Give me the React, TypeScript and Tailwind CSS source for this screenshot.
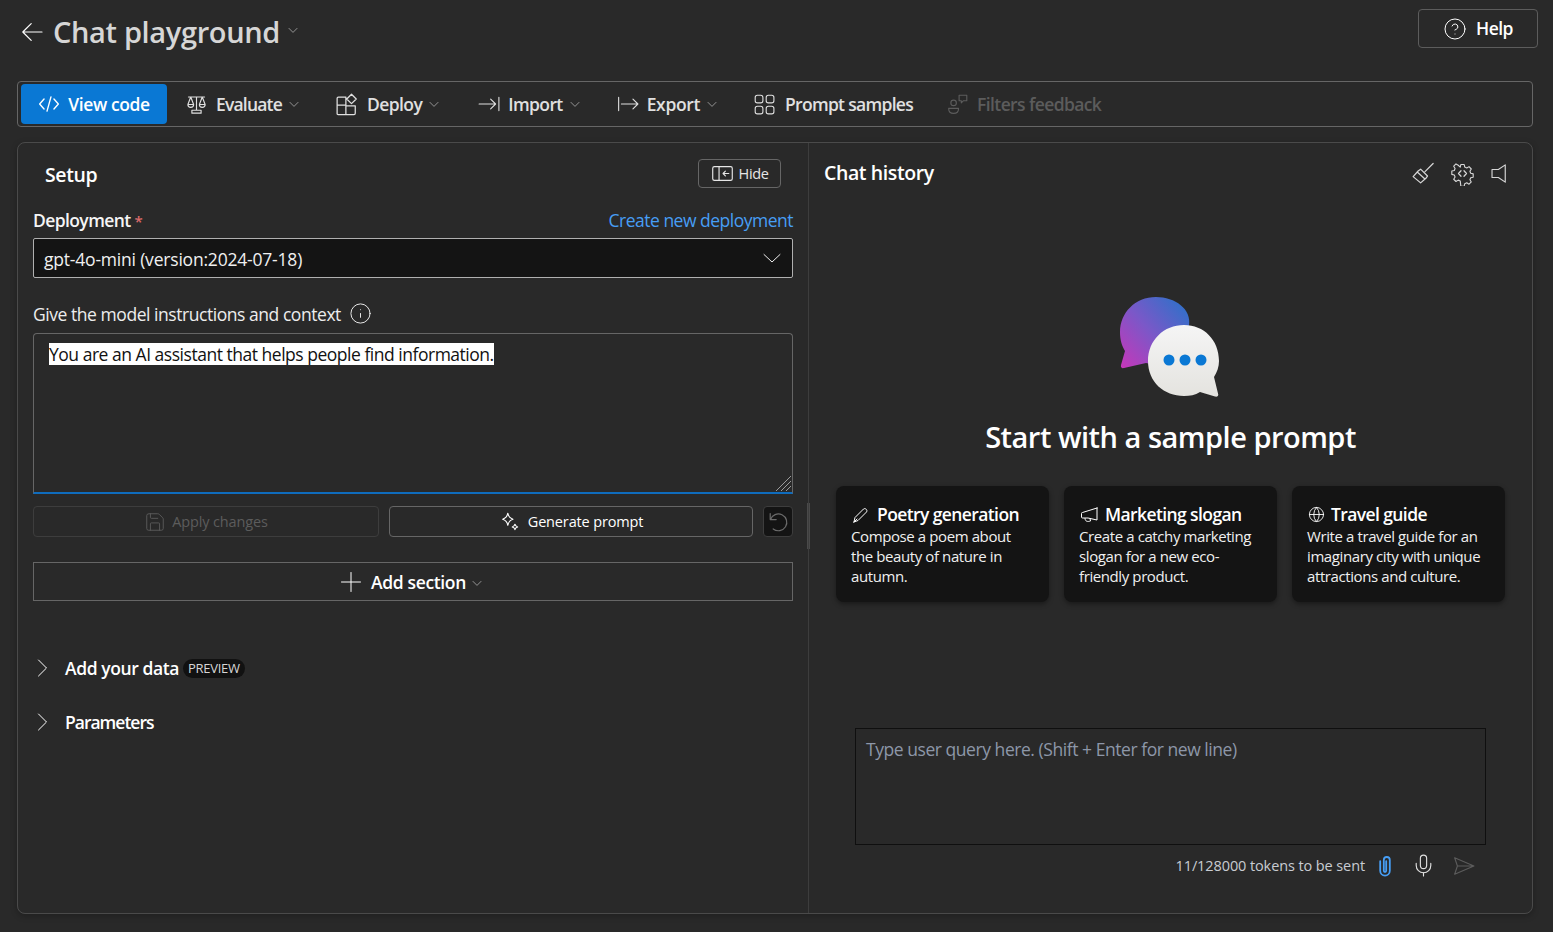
import { CircleHelp, Globe, Info, Mic, Save } from "lucide-react";
import type { ReactNode } from "react";

const font = "font-['Open_Sans','Noto_Sans',sans-serif]";

function Ico({ size = 20, className = "", sw = 1, children }: { size?: number; className?: string; sw?: number; children: ReactNode }) {
  return (
    <svg width={size} height={size} viewBox="0 0 20 20" fill="none" stroke="currentColor" strokeWidth={sw} strokeLinecap="round" strokeLinejoin="round" className={`shrink-0 ${className}`}>
      {children}
    </svg>
  );
}

function Chevron({ className = "" }: { className?: string }) {
  return (
    <Ico size={16} className={`text-[#adadad] ${className}`}>
      <path d="M5 8l5 5 5-5" />
    </Ico>
  );
}

function ExpandChevron() {
  return (
    <Ico size={20}>
      <path d="M5.500 2l8 8-8 8" />
    </Ico>
  );
}

interface ToolItemProps {
  icon: ReactNode;
  label: string;
  caret?: boolean;
  muted?: boolean;
  className?: string;
  labelClassName?: string;
}

function ToolItem({ icon, label, caret, muted, className = "pl-[18px] pr-[16px]", labelClassName = "ml-2 tracking-[-0.6px]" }: ToolItemProps) {
  return (
    <div className={`flex items-center h-[40px] text-[17.5px] font-semibold ${muted ? "text-[#5c5c5c]" : "text-[#e0e0e0]"} ${className}`}>
      {icon}
      <span className={labelClassName}>{label}</span>
      {caret && <Chevron className="ml-[4px]" />}
    </div>
  );
}

function SampleCard({ icon, title, text }: { icon: ReactNode; title: string; text: string }) {
  return (
    <div className="w-[213px] h-[116px] rounded-lg bg-[#141414] shadow-[0_2px_5px_rgba(0,0,0,0.4)] pt-[17px] pl-[15px] pr-[17px] text-white">
      <div className="flex items-center gap-[6px] text-[17.5px] leading-[23px] font-semibold tracking-[-0.6px]">
        {icon}
        {title}
      </div>
      <p className="text-[15px] leading-5 tracking-[-0.4px] text-[#f0f0f0]">{text}</p>
    </div>
  );
}

function ChatLogo() {
  return (
    <svg width="104" height="102" viewBox="0 0 104 102">
      <defs>
        <linearGradient id="bubbleBack" x1="0" y1="1" x2="1" y2="0.1">
          <stop offset="0" stopColor="#c836b8" />
          <stop offset="0.5" stopColor="#7a58c8" />
          <stop offset="1" stopColor="#2b72c9" />
        </linearGradient>
        <linearGradient id="bubbleFront" x1="0" y1="0" x2="0" y2="1">
          <stop offset="0" stopColor="#f5f5f5" />
          <stop offset="1" stopColor="#e4e3df" />
        </linearGradient>
      </defs>
      <path d="M37 0C16 0 1 16 1 35c0 8 2 14 5 19L2 68c-.6 2.4 1 3.6 3 3l22-5 14 3 29-40C73 12 56 0 37 0Z" fill="url(#bubbleBack)" />
      <path d="M65 28c-20 0-36 15-36 36s16 35 36 35c6 0 11-1 16-4l15 4.500c2.400.6 4-1 3-3L95 80c3-5 5-10 5-16 0-21-15-36-35-36Z" fill="url(#bubbleFront)" />
      <circle cx="50" cy="63" r="5.500" fill="#0a78d4" />
      <circle cx="66" cy="63" r="5.500" fill="#0a78d4" />
      <circle cx="82" cy="63" r="5.500" fill="#0a78d4" />
    </svg>
  );
}

export default function App() {
  return (
    <div className={`h-[932px] w-[1553px] overflow-hidden bg-[#292929] text-white ${font}`}>
      <header className="flex justify-between pl-[21px] pr-[15px] pt-[9px] h-[81px]">
        <div className="flex items-center h-[46px]">
          <Ico size={24}>
            <path d="M1.500 10h16M8.500 3l-7 7 7 7" />
          </Ico>
          <h1 className="ml-2 text-[29px] font-semibold tracking-[-0.35px] text-[#d6d6d6]">Chat playground</h1>
          <Chevron className="ml-[5px] mb-1" />
        </div>
        <div className="flex items-center justify-center gap-[9px] w-[120px] h-[39px] rounded border border-[#5c5c5c] text-[17.5px] font-semibold tracking-[-0.5px]">
          <CircleHelp size={24} strokeWidth={1} />
          Help
        </div>
      </header>

      <nav className="ml-[17px] w-[1516px] h-[46px] flex items-center rounded border border-[#666] pl-[3px]">
        <div className="flex items-center gap-2 h-[40px] w-[146px] justify-center rounded bg-[#0a78d4] text-[17.5px] font-semibold tracking-[-0.4px]">
          <Ico size={22} sw={1.25}>
            <path d="M5.500 5.500 1.500 10l4 4.500M14.500 5.500l4 4.500-4 4.500M11.800 3.500l-3.600 13" />
          </Ico>
          View code
        </div>
        <ToolItem
          labelClassName="ml-2 tracking-[-0.8px]"
          icon={
            <Ico size={23}>
              <path d="M3 3.500h14M10 3.500v11.500M6 15h8v2.500H6V15ZM5 3.500 2.500 10h5L5 3.500ZM15 3.500 12.500 10h5L15 3.500ZM2.500 10a2.500 2.500 0 0 0 5 0M12.500 10a2.500 2.500 0 0 0 5 0" />
            </Ico>
          }
          label="Evaluate"
          caret
        />
        <ToolItem
          icon={
            <Ico size={25} className="-ml-[2px]">
              <path d="M9 4H3.500A1 1 0 0 0 2.500 5v12a.8.8 0 0 0 1 1H16a1 1 0 0 0 1-1v-6h-7.500V4ZM2.500 10.500h7v7.500M14 1.800l3.800 3.800L14 9.300l-3.800-3.700L14 1.800Z" />
            </Ico>
          }
          label="Deploy"
          caret
        />
        <ToolItem
          className="pl-[20px] pr-[16px]"
          icon={
            <Ico size={22}>
              <path d="M1 10h15M11.500 5.500l4.500 4.500-4.500 4.500M19 4v12" />
            </Ico>
          }
          label="Import"
          caret
        />
        <ToolItem
          className="pl-[18px] pr-[15px]"
          labelClassName="ml-2 tracking-[-0.35px]"
          icon={
            <Ico size={22}>
              <path d="M1.500 4v12M4 10h15M14.500 5.500 19 10l-4.500 4.500" />
            </Ico>
          }
          label="Export"
          caret
        />
        <ToolItem
          labelClassName="ml-[10px] tracking-[-0.7px]"
          icon={
            <Ico size={22}>
              <rect x="2" y="2" width="7" height="7" rx="2" />
              <rect x="12" y="2" width="7" height="7" rx="2" />
              <rect x="2" y="12" width="7" height="7" rx="2" />
              <rect x="12" y="12" width="7" height="7" rx="2" />
            </Ico>
          }
          label="Prompt samples"
        />
        <ToolItem
          muted
          icon={
            <Ico size={22}>
              <circle cx="6" cy="9" r="2.500" />
              <path d="M1.500 14h9c0 3-2 4.500-4.500 4.500S1.500 17 1.500 14ZM11 2h7v5h-3l-2 2V7h-2V2Z" />
            </Ico>
          }
          label="Filters feedback"
        />
      </nav>

      <main className="ml-[17px] w-[1516px] mt-[15px] h-[772px] flex rounded-lg border border-[#4a4a4a] shadow-[0_2px_6px_rgba(0,0,0,0.25)]">
        <section className="relative w-[791px] shrink-0 border-r border-[#3d3d3d] px-[15px]">
          <div className="flex items-start justify-between px-3 pt-4 h-[56px]">
            <h2 className="text-[19.5px] leading-[32px] font-semibold tracking-[-0.4px]">Setup</h2>
            <div className="flex items-center gap-[5px] w-[83px] h-[29px] justify-center rounded border border-[#666] text-[14.5px] tracking-[-0.4px] text-[#e6e6e6]">
              <Ico size={23}>
                <rect x="1.500" y="4" width="17" height="12" rx="1.500" />
                <path d="M7 4v12M15.500 10h-5M12.500 8l-2 2 2 2" />
              </Ico>
              Hide
            </div>
          </div>

          <div className="flex items-center justify-between h-[39px] pb-[1px] pt-[5px] text-[17.5px] tracking-[-0.5px]">
            <span className="font-semibold tracking-[-0.6px] text-[#f5f5f5]">
              Deployment <span className="text-[#dc6b6b] text-[15px]">*</span>
            </span>
            <span className="text-[#479ef5]">Create new deployment</span>
          </div>
          <div className="flex items-center justify-between h-[40px] rounded-[2px] border border-[#b0b0b0] bg-[#141414] px-[10px] pt-[2px] text-[17.5px] tracking-[-0.2px] text-[#f0f0f0]">
            gpt-4o-mini (version:2024-07-18)
            <Ico size={20} className="mb-[2px]">
              <path d="M2 6.500 10 14l8-7.500" />
            </Ico>
          </div>

          <div className="flex items-center gap-2 h-[55px] pt-[19px] pb-[1px] text-[17.5px] tracking-[-0.45px] text-[#ededed]">
            Give the model instructions and context
            <Info size={23} strokeWidth={1} className="mb-[2px]" />
          </div>
          <div className="relative h-[161px] rounded-t border border-[#666] border-b-2 border-b-[#0f6cbd] pl-[15px] pt-[9px]">
            <span className="inline-block bg-white text-[#111] text-[17.5px] leading-[22px] tracking-[-0.48px]">
              You are an AI assistant that helps people find information.
            </span>
            <svg width="18" height="18" viewBox="0 0 18 18" className="absolute right-0 bottom-0 text-[#9a9a9a]" stroke="currentColor" strokeWidth="1">
              <path d="M17 2 2 17M17 7 7 17M17 12l-5 5" />
            </svg>
          </div>

          <div className="flex gap-[10px] mt-3 h-[31px]">
            <div className="flex items-center justify-center gap-[6px] w-[346px] rounded border border-[#3d3d3d] text-[14.5px] tracking-[-0.15px] text-[#5c5c5c]">
              <Save size={22} strokeWidth={1} />
              Apply changes
            </div>
            <div className="flex items-center justify-center gap-[7px] w-[364px] rounded border border-[#666] text-[14.5px] tracking-[-0.15px] text-white">
              <Ico size={22}>
                <path d="M8 2c.6 3.300 1.800 4.700 4.700 5.500-2.900.8-4.100 2.200-4.700 5.500-.6-3.300-1.800-4.700-4.700-5.500C6.200 6.700 7.400 5.300 8 2ZM14.500 12c.3 1.500 1 2.200 2.500 2.500-1.500.3-2.200 1-2.500 2.500-.3-1.500-1-2.200-2.500-2.500 1.500-.3 2.200-1 2.500-2.500Z" />
              </Ico>
              Generate prompt
            </div>
            <div className="flex items-center justify-center w-[30px] rounded border border-[#3d3d3d] bg-[#141414] text-[#6b6b6b]">
              <Ico size={24}>
                <path d="M3.500 3v5h5M3.700 8A7 7 0 1 1 6 15.800" />
              </Ico>
            </div>
          </div>
          <div className="absolute left-[789px] top-[360px] h-[46px] w-[3px] border-x border-[#4a4a4a]" />

          <div className="mt-[25px] flex items-center justify-center gap-[10px] h-[39px] border border-[#666] text-[17.5px] font-semibold tracking-[-0.35px]">
            <Ico size={20}>
              <path d="M10 .500v19M.500 10h19" />
            </Ico>
            <span className="flex items-center pt-[2px]">
              Add section
              <Chevron className="ml-[3px]" />
            </span>
          </div>

          <div className="mt-[50px] flex items-center h-[34px] text-[17.5px] font-semibold tracking-[-0.4px]">
            <ExpandChevron />
            <span className="ml-[12px]">Add your data</span>
            <span className="ml-[4px] rounded-full bg-[#111] px-[5px] text-[13px] leading-[19px] font-normal tracking-[-0.3px] text-[#d6d6d6]">PREVIEW</span>
          </div>
          <div className="mt-[20px] flex items-center h-[34px] text-[17.5px] font-semibold tracking-[-1px]">
            <ExpandChevron />
            <span className="ml-[12px]">Parameters</span>
          </div>
        </section>

        <section className="flex-1 flex flex-col pl-[15px]">
          <div className="flex items-center justify-between h-[60px] pr-[21px]">
            <h2 className="text-[19.5px] font-semibold tracking-[-0.4px]">Chat history</h2>
            <div className="flex items-center text-[#d6d6d6]">
              <Ico size={25}>
                <path d="M18.500 2 12 8.500M8.500 6.500l5.500 5.500-1.500 2-4 3.500-6-5 4-4.500 2-1.500ZM6 9l5.500 5" />
              </Ico>
              <Ico size={25} className="ml-[15px]">
                <path d="M8.500 2h3l.5 2.300 1.800.8 2-1.200 2 2.100-1.200 2 .7 1.800 2.200.5v3l-2.200.5-.7 1.700 1.200 2-2 2-2-1.200-1.800.8-.5 2.200h-3L8 16.600l-1.800-.7-2 1.200-2-2 1.200-2-.7-1.700-2.200-.6v-3l2.200-.5.7-1.800-1.200-2 2-2 2 1.200L8 4.300 8.500 2Z" transform="translate(1 1) scale(.9)" />
                <path d="M8.800 7.800 6.800 10l2 2.200M11.200 7.800l2 2.200-2 2.200" />
              </Ico>
              <Ico size={23} className="ml-[13px]">
                <path d="M15 2.500v15l-6-4H3.500v-7H9l6-4Z" />
              </Ico>
            </div>
          </div>

          <div className="flex justify-center pr-[14px] mt-[94px]">
            <ChatLogo />
          </div>
          <h3 className="mt-[15px] pr-[15px] text-center text-[29px] leading-[45px] font-semibold tracking-[-0.5px] text-white">Start with a sample prompt</h3>
          <div className="mt-[27px] ml-[12px] flex gap-[15px]">
            <SampleCard
              title="Poetry generation"
              text="Compose a poem about the beauty of nature in autumn."
              icon={
                <Ico size={20}>
                  <path d="M3 17l1-4.500L12.500 4c1.500-1.300 4.500.8 3 3l-8.500 8.500L3 17ZM3 17l3-3" />
                </Ico>
              }
            />
            <SampleCard
              title="Marketing slogan"
              text="Create a catchy marketing slogan for a new eco-friendly product."
              icon={
                <Ico size={20}>
                  <path d="M18 3v12L9 13H3.500a1 1 0 0 1-1-1V8.500a1 1 0 0 1 1-1L18 3ZM6 13.500c0 3 2.500 3.500 5.500 2.500l-.5-2.500" />
                </Ico>
              }
            />
            <SampleCard title="Travel guide" text="Write a travel guide for an imaginary city with unique attractions and culture." icon={<Globe size={17} strokeWidth={1.25} className="ml-[1px]" />} />
          </div>

          <div className="mt-[126px] ml-[31px] h-[117px] w-[631px] border border-[#0f0f0f] px-[10px] py-[7px] text-[17.5px] leading-[26px] tracking-[-0.45px] text-[#8d97a8]">
            Type user query here. (Shift + Enter for new line)
          </div>
          <div className="mt-[8px] ml-[31px] w-[631px] flex items-center justify-end pr-[11px] text-[14.5px] tracking-[-0.1px] text-[#c8ccd2]">
            <span>11/128000 tokens to be sent</span>
            <Ico size={24} sw={1.5} className="ml-2 text-[#479ef5]">
              <path d="M6 6v8a4 4 0 0 0 8 0V5a2.500 2.500 0 0 0-5 0v9a1 1 0 0 0 2 0V6" />
            </Ico>
            <Mic size={25} strokeWidth={1.1} className="ml-[14px] text-[#e0e0e0]" />
            <Ico size={22} className="ml-[17px] text-[#5c5c5c]">
              <path d="M1.500 2.500 19 10 1.500 17.500 4 10 1.500 2.500ZM4 10h15" />
            </Ico>
          </div>
        </section>
      </main>
    </div>
  );
}
